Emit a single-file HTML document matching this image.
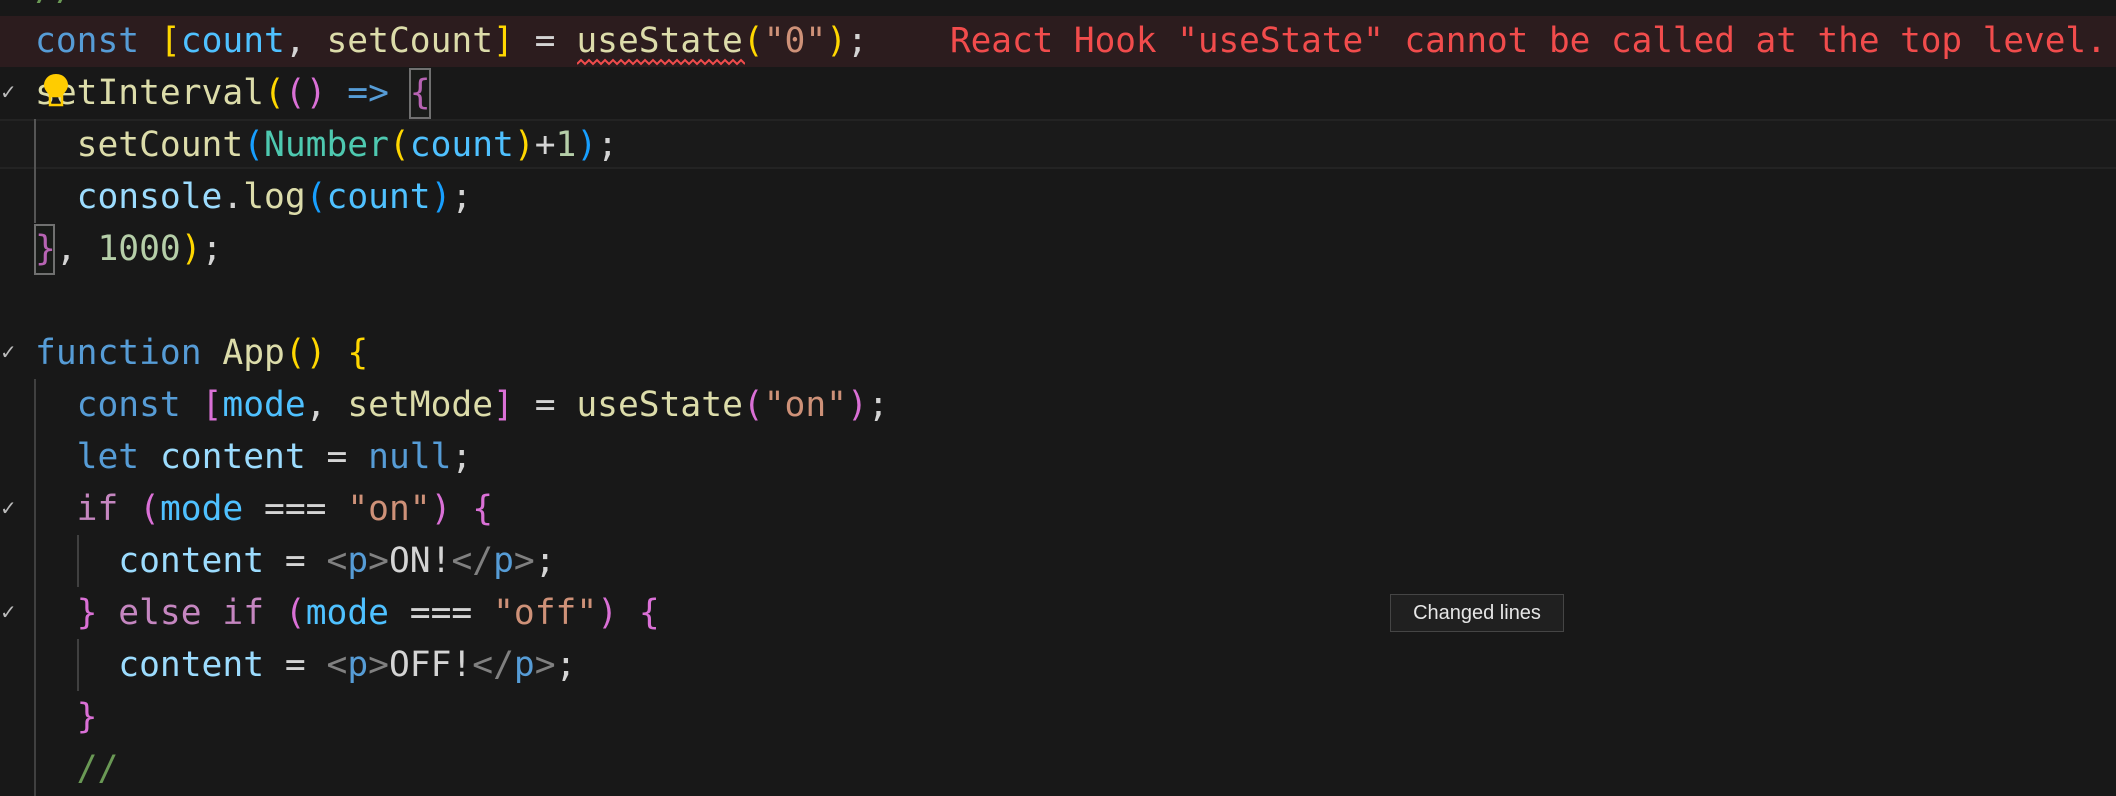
<!DOCTYPE html>
<html><head><meta charset="utf-8"><style>
body{margin:0;width:2116px;height:796px;background:#181818;overflow:hidden;position:relative;font-family:"DejaVu Sans Mono","Liberation Mono",monospace;}
.l{position:absolute;left:35px;height:52px;line-height:52px;font-size:34.6px;white-space:pre;color:#d4d4d4;}
.k{color:#569cd6}.v{color:#4fc1ff}.f{color:#dcdcaa}.s{color:#ce9178}.g{color:#ffd700}.p{color:#da70d6}.b{color:#179fff}
.t{color:#4ec9b0}.n{color:#b5cea8}.c{color:#c586c0}.cv{color:#9cdcfe}.tg{color:#808080}.cm{color:#6a9955}.w{color:#d4d4d4}
.guide{position:absolute;width:2px;background:#404040}
.chk{position:absolute;left:0;color:#bbb;font-size:20px;font-family:"DejaVu Sans",sans-serif}
.box{position:absolute;border:2px solid #707070;box-sizing:border-box;background:#1e2a1e30}
</style></head><body>
<div style="position:absolute;left:0;top:16px;width:2116px;height:51px;background:#2c1c1e"></div>
<div style="position:absolute;left:0;top:119px;width:2116px;height:50px;border-top:2px solid #232323;border-bottom:2px solid #232323;box-sizing:border-box;background:#1a1a1a"></div>
<div class="l cm" style="top:-37px">//</div>
<div class="l" style="top:15px"><span class="k">const</span> <span class="g">[</span><span class="v">count</span>, <span class="f">setCount</span><span class="g">]</span> = <span class="f">useState</span><span class="g">(</span><span class="s">"0"</span><span class="g">)</span>;</div>
<svg style="position:absolute;left:577px;top:58px" width="168" height="8"><polyline fill="none" stroke="#f14c4c" stroke-width="2" points="0,6 4,2 8,6 12,2 16,6 20,2 24,6 28,2 32,6 36,2 40,6 44,2 48,6 52,2 56,6 60,2 64,6 68,2 72,6 76,2 80,6 84,2 88,6 92,2 96,6 100,2 104,6 108,2 112,6 116,2 120,6 124,2 128,6 132,2 136,6 140,2 144,6 148,2 152,6 156,2 160,6 164,2 168,6"/></svg>
<div class="l" style="top:15px;left:950px;color:#f14c4c;font-size:34.4px;letter-spacing:-0.05px">React Hook "useState" cannot be called at the top level.</div>
<div class="l" style="top:67px"><span class="f">setInterval</span><span class="g">(</span><span class="p">()</span> <span class="k">=&gt;</span> <span class="p">{</span></div>
<div class="l" style="top:119px">  <span class="f">setCount</span><span class="b">(</span><span class="t">Number</span><span class="g">(</span><span class="v">count</span><span class="g">)</span>+<span class="n">1</span><span class="b">)</span>;</div>
<div class="l" style="top:171px">  <span class="cv">console</span>.<span class="f">log</span><span class="b">(</span><span class="v">count</span><span class="b">)</span>;</div>
<div class="l" style="top:223px"><span class="p">}</span>, <span class="n">1000</span><span class="g">)</span>;</div>
<div class="l" style="top:327px"><span class="k">function</span> <span class="f">App</span><span class="g">()</span> <span class="g">{</span></div>
<div class="l" style="top:379px">  <span class="k">const</span> <span class="p">[</span><span class="v">mode</span>, <span class="f">setMode</span><span class="p">]</span> = <span class="f">useState</span><span class="p">(</span><span class="s">"on"</span><span class="p">)</span>;</div>
<div class="l" style="top:431px">  <span class="k">let</span> <span class="cv">content</span> = <span class="k">null</span>;</div>
<div class="l" style="top:483px">  <span class="c">if</span> <span class="p">(</span><span class="v">mode</span> === <span class="s">"on"</span><span class="p">)</span> <span class="p">{</span></div>
<div class="l" style="top:535px">    <span class="cv">content</span> = <span class="tg">&lt;</span><span class="k">p</span><span class="tg">&gt;</span>ON!<span class="tg">&lt;/</span><span class="k">p</span><span class="tg">&gt;</span>;</div>
<div class="l" style="top:587px">  <span class="p">}</span> <span class="c">else if</span> <span class="p">(</span><span class="v">mode</span> === <span class="s">"off"</span><span class="p">)</span> <span class="p">{</span></div>
<div class="l" style="top:639px">    <span class="cv">content</span> = <span class="tg">&lt;</span><span class="k">p</span><span class="tg">&gt;</span>OFF!<span class="tg">&lt;/</span><span class="k">p</span><span class="tg">&gt;</span>;</div>
<div class="l" style="top:691px">  <span class="p">}</span></div>
<div class="l cm" style="top:743px">  //</div>
<div class="guide" style="left:34px;top:119px;height:104px;background:#555"></div>
<div class="guide" style="left:34px;top:379px;height:417px"></div>
<div class="guide" style="left:77px;top:535px;height:52px"></div>
<div class="guide" style="left:77px;top:639px;height:52px"></div>
<div class="box" style="left:409px;top:68px;width:22px;height:51px"></div>
<div class="box" style="left:34px;top:224px;width:21px;height:51px"></div>
<div class="chk" style="top:80px">✓</div>
<div class="chk" style="top:340px">✓</div>
<div class="chk" style="top:496px">✓</div>
<div class="chk" style="top:600px">✓</div>
<svg style="position:absolute;left:42px;top:72px" width="30" height="38"><path d="M14,2 C6,2 2,8 2,13 C2,18 6,21 8,24 L20,24 C22,21 26,18 26,13 C26,8 22,2 14,2 Z" fill="#ffcc00"/><rect x="8" y="24" width="12" height="9" fill="none" stroke="#ffcc00" stroke-width="2.5"/></svg>
<div style="position:absolute;left:1390px;top:594px;width:174px;height:38px;box-sizing:border-box;border:1px solid #454545;background:#202020;color:#e6e6e6;font-family:'Liberation Sans',sans-serif;font-size:20px;line-height:36px;text-align:center">Changed lines</div>
</body></html>
